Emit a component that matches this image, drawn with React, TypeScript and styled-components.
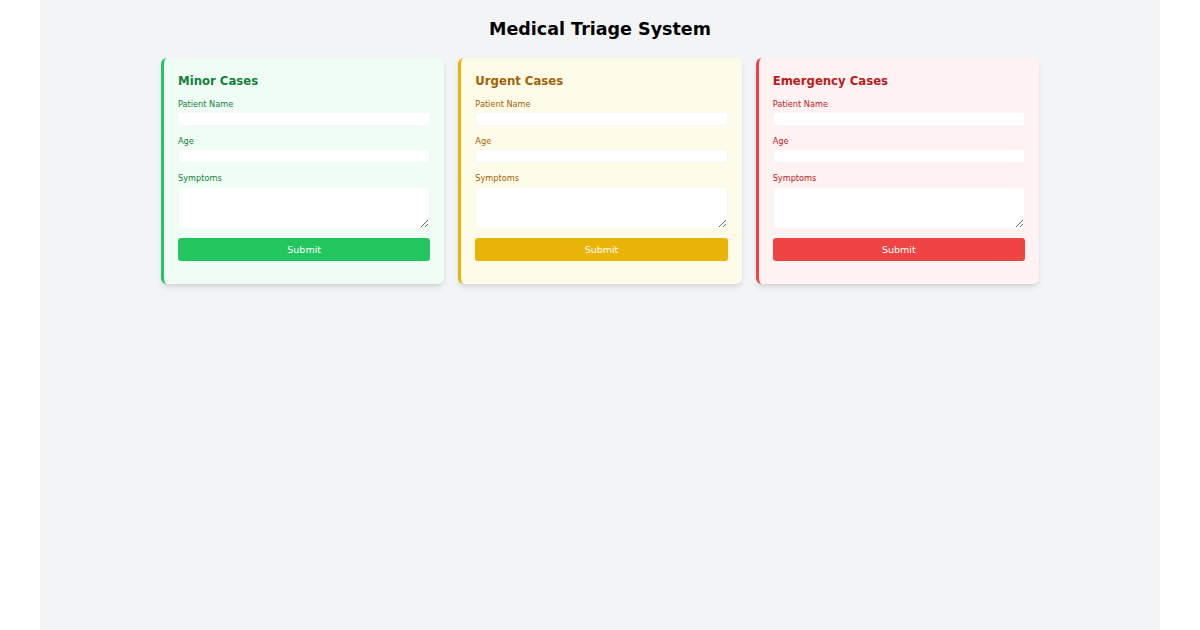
import React from "react";
import styled, { createGlobalStyle } from "styled-components";

type Tone = "green" | "yellow" | "red";

const tones: Record<Tone, { bg: string; edge: string; text: string; btn: string }> = {
  green: { bg: "#f0fdf4", edge: "#22c55e", text: "#15803d", btn: "#22c55e" },
  yellow: { bg: "#fefce8", edge: "#eab308", text: "#a16207", btn: "#eab308" },
  red: { bg: "#fef2f2", edge: "#ef4444", text: "#b91c1c", btn: "#ef4444" },
};

const GlobalStyle = createGlobalStyle`
  body {
    margin: 0;
    background: #fff;
    font-family: "DejaVu Sans", "Liberation Sans", sans-serif;
  }
`;

const Page = styled.div`
  width: 1120px;
  min-height: 630px;
  margin: 0 auto;
  background: #f3f4f6;
  padding-top: 18px;
  box-sizing: border-box;
`;

const Title = styled.h1`
  margin: 0;
  text-align: center;
  font-size: 17.5px;
  line-height: 22px;
  font-weight: 700;
  color: #000;
`;

const Grid = styled.div`
  width: 878px;
  margin: 18px auto 0;
  display: grid;
  grid-template-columns: repeat(3, 1fr);
  gap: 14px;
`;

const Card = styled.div<{ $tone: Tone }>`
  background: ${(p) => tones[p.$tone].bg};
  border-left: 3px solid ${(p) => tones[p.$tone].edge};
  border-radius: 6px;
  box-shadow: 0 4px 6px -1px rgba(0, 0, 0, 0.1), 0 2px 4px -2px rgba(0, 0, 0, 0.1);
  padding: 15px 14px 23px;
`;

const CardTitle = styled.h2<{ $tone: Tone }>`
  margin: 0 0 9px;
  font-size: 11.7px;
  line-height: 16px;
  font-weight: 700;
  color: ${(p) => tones[p.$tone].text};
`;

const Field = styled.div`
  margin-bottom: 9px;
`;

const Label = styled.label<{ $tone: Tone }>`
  display: block;
  font-size: 8.2px;
  line-height: 12px;
  margin-bottom: 2px;
  color: ${(p) => tones[p.$tone].text};
`;

const Input = styled.input`
  display: block;
  width: 100%;
  height: 14px;
  box-sizing: border-box;
  border: 1px solid rgba(0, 0, 0, 0.03);
  border-radius: 4px;
  background: #fff;
  padding: 0 4px;
  outline: none;
`;

const Area = styled.textarea`
  display: block;
  width: 100%;
  height: 42px;
  margin-top: 3px;
  box-sizing: border-box;
  border: 1px solid rgba(0, 0, 0, 0.03);
  border-radius: 4px;
  background: #fff;
  padding: 4px;
  outline: none;
`;

const Submit = styled.button<{ $tone: Tone }>`
  display: block;
  width: 100%;
  height: 23px;
  border: none;
  border-radius: 3px;
  background: ${(p) => tones[p.$tone].btn};
  color: #fff;
  font-family: "DejaVu Sans", sans-serif;
  font-size: 9.5px;
  cursor: pointer;
`;

const sections: { tone: Tone; title: string }[] = [
  { tone: "green", title: "Minor Cases" },
  { tone: "yellow", title: "Urgent Cases" },
  { tone: "red", title: "Emergency Cases" },
];

export default function App() {
  return (
    <>
      <GlobalStyle />
      <Page>
        <Title>Medical Triage System</Title>
        <Grid>
          {sections.map((s) => (
            <Card key={s.tone} $tone={s.tone}>
              <CardTitle $tone={s.tone}>{s.title}</CardTitle>
              <form onSubmit={(e) => e.preventDefault()}>
                <Field>
                  <Label $tone={s.tone}>Patient Name</Label>
                  <Input type="text" />
                </Field>
                <Field>
                  <Label $tone={s.tone}>Age</Label>
                  <Input type="number" />
                </Field>
                <Field>
                  <Label $tone={s.tone}>Symptoms</Label>
                  <Area />
                </Field>
                <Submit type="submit" $tone={s.tone}>
                  Submit
                </Submit>
              </form>
            </Card>
          ))}
        </Grid>
      </Page>
    </>
  );
}
